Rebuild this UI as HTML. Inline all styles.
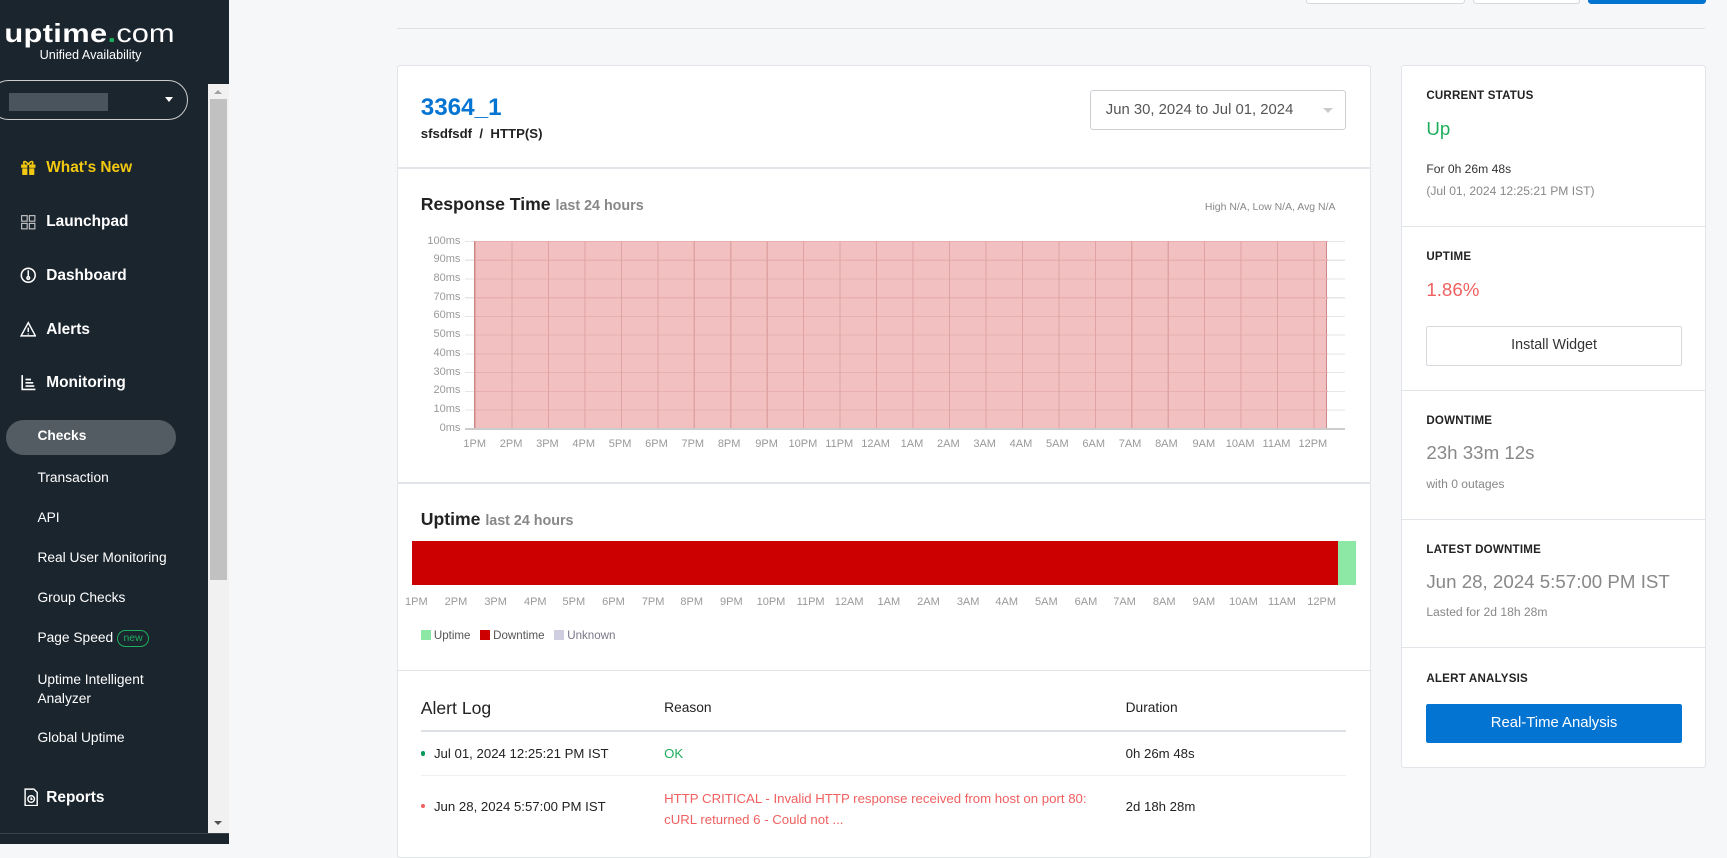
<!DOCTYPE html>
<html><head><meta charset="utf-8"><style>
*{box-sizing:border-box;margin:0;padding:0}
html,body{width:1727px;height:844px;overflow:hidden;background:#f6f7f9;font-family:"Liberation Sans",sans-serif}
#w{position:absolute;left:0;top:0;width:1568px;height:766px;zoom:1.10140;background:#f6f7f9}
.a{position:absolute;white-space:nowrap}
#sb{position:absolute;left:0;top:0;width:208px;height:766px;background:#1b252e}
.nav{position:absolute;left:42px;color:#fff;font-size:14px;font-weight:bold}
.sub{position:absolute;left:34px;color:#fff;font-size:12.5px}
.ic{position:absolute;left:18px;width:15px;height:15px}
.card{position:absolute;background:#fff;border:1px solid #e1e4e8;border-radius:3px}
.hr{position:absolute;height:1px;background:#e1e4e8}
.yl{position:absolute;right:1150px;font-size:10px;color:#999;text-align:right}
.xl{position:absolute;font-size:10px;color:#999;transform:translateX(-50%)}
.lbl{position:absolute;left:1295px;font-size:10.5px;font-weight:bold;color:#222;letter-spacing:.2px}
</style></head><body><div id="w">
<!-- top bar -->
<div class="a" style="left:360px;top:25px;width:1188px;height:1px;background:#dde0e4"></div>
<div class="a" style="left:1186px;top:-4px;width:144px;height:8px;border:1px solid #d5d8dc;border-radius:3px;background:#fff"></div>
<div class="a" style="left:1337px;top:-4px;width:98px;height:8px;border:1px solid #d5d8dc;border-radius:3px;background:#fff"></div>
<div class="a" style="left:1442px;top:-4px;width:107px;height:8px;border-radius:3px;background:#0474d2"></div>

<!-- sidebar -->
<div id="sb">
 <div class="a" style="left:4px;top:17px;color:#fff;font-size:28px;font-weight:bold;letter-spacing:.3px;line-height:30px;transform:scaleY(.85);transform-origin:0 0">uptime<span style="color:#1fae5d">.</span><span style="font-weight:normal;letter-spacing:0">com</span></div>
 <div class="a" style="left:36px;top:44px;color:#fff;font-size:11.5px">Unified Availability</div>
 <div class="a" style="left:-10px;top:73px;width:181px;height:36px;border:1px solid #ccc;border-radius:18px"></div>
 <div class="a" style="left:8px;top:84px;width:90px;height:17px;background:#4a545c"></div>
 <div class="a" style="left:150px;top:88px;width:0;height:0;border-left:4px solid transparent;border-right:4px solid transparent;border-top:5px solid #fff"></div>
 <svg class="ic" style="top:144px" viewBox="0 0 15 15"><rect x="1" y="5" width="13" height="3" fill="#f2c811"/><rect x="2" y="8.5" width="11" height="6" fill="#f2c811"/><rect x="6.7" y="5" width="1.6" height="10" fill="#1b252e"/><path d="M7.5 5C5 1 2 2 4 5M7.5 5C10 1 13 2 11 5" stroke="#f2c811" stroke-width="1.5" fill="none"/></svg>
 <div class="nav" style="top:144px;color:#f2c811">What's New</div>
 <svg class="ic" style="top:194px" viewBox="0 0 15 15" fill="none" stroke="#ccc"><rect x="1.5" y="1.5" width="5" height="5"/><rect x="8.5" y="1.5" width="5" height="5"/><rect x="1.5" y="8.5" width="5" height="5"/><rect x="8.5" y="8.5" width="5" height="5"/></svg>
 <div class="nav" style="top:193px">Launchpad</div>
 <svg class="ic" style="top:242px" viewBox="0 0 15 15" fill="none" stroke="#fff" stroke-width="1.4"><circle cx="7.5" cy="7.5" r="6.3"/><path d="M7.5 3v6"/><circle cx="7.5" cy="10" r="1.2"/></svg>
 <div class="nav" style="top:242px">Dashboard</div>
 <svg class="ic" style="top:291px" viewBox="0 0 15 15" fill="none" stroke="#fff" stroke-width="1.3"><path d="M7.5 1.5L14 13.5H1z"/><path d="M7.5 6v4M7.5 11.3v1"/></svg>
 <div class="nav" style="top:291px">Alerts</div>
 <svg class="ic" style="top:340px" viewBox="0 0 15 15" fill="none" stroke="#fff" stroke-width="1.5"><path d="M2 1v13h12M5 5h5M5 8h7M5 11h8"/></svg>
 <div class="nav" style="top:340px">Monitoring</div>
 <div class="a" style="left:5px;top:381px;width:155px;height:32px;border-radius:16px;background:#535c63"></div>
 <div class="sub" style="top:389px;font-weight:bold">Checks</div>
 <div class="sub" style="top:427px">Transaction</div>
 <div class="sub" style="top:463px">API</div>
 <div class="sub" style="top:499px">Real User Monitoring</div>
 <div class="sub" style="top:536px">Group Checks</div>
 <div class="sub" style="top:572px">Page Speed <span style="display:inline-block;border:1px solid #1fae5d;color:#1fae5d;border-radius:9px;font-size:9.5px;padding:0 5px;line-height:14px;vertical-align:1px">new</span></div>
 <div class="sub" style="top:608px;line-height:18px">Uptime Intelligent<br>Analyzer</div>
 <div class="sub" style="top:663px">Global Uptime</div>
 <svg class="ic" style="top:715px;left:22px;width:13px;height:17px" viewBox="0 0 13 17" fill="none" stroke="#fff" stroke-width="1.3"><path d="M1 1h8l3 3v12H1z"/><circle cx="6.5" cy="10" r="3"/><path d="M6.5 8.5v1.7h1.3"/></svg>
 <div class="nav" style="top:716px">Reports</div>
 <div class="a" style="left:189px;top:76px;width:19px;height:680px;background:#f1f1f1"></div>
 <div class="a" style="left:191px;top:90px;width:15px;height:437px;background:#c1c1c1"></div>
 <div class="a" style="left:194px;top:82px;width:0;height:0;border-left:4px solid transparent;border-right:4px solid transparent;border-bottom:4px solid #a3a3a3"></div>
 <div class="a" style="left:194px;top:745px;width:0;height:0;border-left:4px solid transparent;border-right:4px solid transparent;border-top:4px solid #505050"></div>
 <div class="a" style="left:0;top:756px;width:208px;height:1px;background:#3a444c"></div>
</div>

<!-- main card -->
<div class="card" style="left:360px;top:59px;width:885px;height:720px"></div>
<div class="a" style="left:382px;top:85px;font-size:22px;font-weight:bold;color:#0474d2">3364_1</div>
<div class="a" style="left:382px;top:114px;font-size:12px;color:#222;font-weight:bold">sfsdfsdf&nbsp; / &nbsp;HTTP(S)</div>
<div class="a" style="left:990px;top:82px;width:232px;height:36px;border:1px solid #ccd0d5;border-radius:3px"></div>
<div class="a" style="left:1004px;top:93px;font-size:13.5px;color:#555">Jun 30, 2024 to Jul 01, 2024</div>
<div class="a" style="left:1201px;top:98px;width:0;height:0;border-left:5px solid transparent;border-right:5px solid transparent;border-top:5px solid #ccc"></div>
<div class="hr" style="left:361px;top:152px;width:883px"></div>

<div class="a" style="left:382px;top:176px;font-size:16px;font-weight:bold;color:#222">Response Time <span style="font-size:13px;color:#888">last 24 hours</span></div>
<div class="a" style="left:1094px;top:183px;font-size:9.5px;color:#888">High N/A, Low N/A, Avg N/A</div>
<div class="a" style="left:422px;top:219px;width:799px;height:171px;background:repeating-linear-gradient(180deg,#e6e6e6 0 1px,transparent 1px 17px)"></div>
<div class="a" style="left:430px;top:219px;width:775px;height:170px;background:#f2c0c0;border-top:1px solid #d89a9a;border-left:1px solid #c88;border-right:1px solid #c88"></div>
<div class="a" style="left:431px;top:219px;width:775px;height:170px;background:repeating-linear-gradient(90deg,#e0a3a3 0 1px,transparent 1px 33.1px),repeating-linear-gradient(180deg,#e8b0b0 0 1px,transparent 1px 17px)"></div>
<div class="a" style="left:422px;top:389px;width:799px;height:1px;background:#ccc"></div>
<div class="yl" style="top:213px">100ms</div><div class="yl" style="top:230px">90ms</div><div class="yl" style="top:247px">80ms</div><div class="yl" style="top:264px">70ms</div><div class="yl" style="top:281px">60ms</div><div class="yl" style="top:298px">50ms</div><div class="yl" style="top:315px">40ms</div><div class="yl" style="top:332px">30ms</div><div class="yl" style="top:349px">20ms</div><div class="yl" style="top:366px">10ms</div><div class="yl" style="top:383px">0ms</div>
<div class="hr" style="left:361px;top:438px;width:883px"></div>

<div class="a" style="left:382px;top:462px;font-size:16px;font-weight:bold;color:#222">Uptime <span style="font-size:13px;color:#888">last 24 hours</span></div>
<div class="a" style="left:374px;top:491px;width:841px;height:40px;background:#cc0000"></div>
<div class="a" style="left:1215px;top:491px;width:16px;height:40px;background:#8de8a6"></div>
<div class="a" style="left:382px;top:572px;font-size:10.5px;color:#555"><span style="display:inline-block;width:9px;height:9px;background:#8de8a6;vertical-align:-1px"></span> Uptime &nbsp; <span style="display:inline-block;width:9px;height:9px;background:#cc0000;vertical-align:-1px"></span> Downtime &nbsp; <span style="display:inline-block;width:9px;height:9px;background:#cfcde0;vertical-align:-1px"></span> <span style="color:#778">Unknown</span></div>
<div class="hr" style="left:361px;top:608px;width:883px"></div>

<div class="a" style="left:382px;top:634px;font-size:16px;color:#222">Alert Log</div>
<div class="a" style="left:603px;top:636px;font-size:12.5px;color:#222">Reason</div>
<div class="a" style="left:1022px;top:636px;font-size:12.5px;color:#222">Duration</div>
<div class="a" style="left:382px;top:663px;width:840px;height:2px;background:#dde0e4"></div>
<div class="a" style="left:382px;top:682px;width:4px;height:4px;border-radius:2px;background:#0a9a5a"></div>
<div class="a" style="left:394px;top:677px;font-size:12px;color:#222">Jul 01, 2024 12:25:21 PM IST</div>
<div class="a" style="left:603px;top:677px;font-size:12px;color:#1fae5d">OK</div>
<div class="a" style="left:1022px;top:677px;font-size:12px;color:#222">0h 26m 48s</div>
<div class="hr" style="left:382px;top:704px;width:840px;background:#eef0f2"></div>
<div class="a" style="left:382px;top:730px;width:4px;height:4px;border-radius:2px;background:#f06060"></div>
<div class="a" style="left:394px;top:725px;font-size:12px;color:#222">Jun 28, 2024 5:57:00 PM IST</div>
<div class="a" style="left:603px;top:716px;font-size:12px;color:#f06060;line-height:19px">HTTP CRITICAL - Invalid HTTP response received from host on port 80:<br>cURL returned 6 - Could not ...</div>
<div class="a" style="left:1022px;top:725px;font-size:12px;color:#222">2d 18h 28m</div>

<!-- right card -->
<div class="card" style="left:1272px;top:59px;width:277px;height:638px"></div>
<div class="lbl" style="top:82px">CURRENT STATUS</div>
<div class="a" style="left:1295px;top:107px;font-size:17px;color:#1fae5d">Up</div>
<div class="a" style="left:1295px;top:147px;font-size:11px;color:#333">For 0h 26m 48s</div>
<div class="a" style="left:1295px;top:167px;font-size:11px;color:#888">(Jul 01, 2024 12:25:21 PM IST)</div>
<div class="hr" style="left:1273px;top:205px;width:275px"></div>
<div class="lbl" style="top:228px">UPTIME</div>
<div class="a" style="left:1295px;top:253px;font-size:17px;color:#f06060">1.86%</div>
<div class="a" style="left:1295px;top:296px;width:232px;height:36px;border:1px solid #d5d8dc;border-radius:2px;text-align:center;line-height:34px;font-size:13px;color:#333">Install Widget</div>
<div class="hr" style="left:1273px;top:354px;width:275px"></div>
<div class="lbl" style="top:377px">DOWNTIME</div>
<div class="a" style="left:1295px;top:401px;font-size:17px;color:#888">23h 33m 12s</div>
<div class="a" style="left:1295px;top:433px;font-size:11px;color:#888">with 0 outages</div>
<div class="hr" style="left:1273px;top:471px;width:275px"></div>
<div class="lbl" style="top:494px">LATEST DOWNTIME</div>
<div class="a" style="left:1295px;top:518px;font-size:17px;color:#888">Jun 28, 2024 5:57:00 PM IST</div>
<div class="a" style="left:1295px;top:549px;font-size:11px;color:#888">Lasted for 2d 18h 28m</div>
<div class="hr" style="left:1273px;top:587px;width:275px"></div>
<div class="lbl" style="top:611px">ALERT ANALYSIS</div>
<div class="a" style="left:1295px;top:639px;width:232px;height:36px;background:#0474d2;border-radius:2px;text-align:center;line-height:36px;font-size:13.5px;color:#fff">Real-Time Analysis</div>

<div class="xl" style="left:431px;top:398px">1PM</div><div class="xl" style="left:464px;top:398px">2PM</div><div class="xl" style="left:497px;top:398px">3PM</div><div class="xl" style="left:530px;top:398px">4PM</div><div class="xl" style="left:563px;top:398px">5PM</div><div class="xl" style="left:596px;top:398px">6PM</div><div class="xl" style="left:629px;top:398px">7PM</div><div class="xl" style="left:662px;top:398px">8PM</div><div class="xl" style="left:696px;top:398px">9PM</div><div class="xl" style="left:729px;top:398px">10PM</div><div class="xl" style="left:762px;top:398px">11PM</div><div class="xl" style="left:795px;top:398px">12AM</div><div class="xl" style="left:828px;top:398px">1AM</div><div class="xl" style="left:861px;top:398px">2AM</div><div class="xl" style="left:894px;top:398px">3AM</div><div class="xl" style="left:927px;top:398px">4AM</div><div class="xl" style="left:960px;top:398px">5AM</div><div class="xl" style="left:993px;top:398px">6AM</div><div class="xl" style="left:1026px;top:398px">7AM</div><div class="xl" style="left:1059px;top:398px">8AM</div><div class="xl" style="left:1093px;top:398px">9AM</div><div class="xl" style="left:1126px;top:398px">10AM</div><div class="xl" style="left:1159px;top:398px">11AM</div><div class="xl" style="left:1192px;top:398px">12PM</div>

<div class="xl" style="left:378px;top:541px">1PM</div><div class="xl" style="left:414px;top:541px">2PM</div><div class="xl" style="left:450px;top:541px">3PM</div><div class="xl" style="left:486px;top:541px">4PM</div><div class="xl" style="left:521px;top:541px">5PM</div><div class="xl" style="left:557px;top:541px">6PM</div><div class="xl" style="left:593px;top:541px">7PM</div><div class="xl" style="left:628px;top:541px">8PM</div><div class="xl" style="left:664px;top:541px">9PM</div><div class="xl" style="left:700px;top:541px">10PM</div><div class="xl" style="left:736px;top:541px">11PM</div><div class="xl" style="left:771px;top:541px">12AM</div><div class="xl" style="left:807px;top:541px">1AM</div><div class="xl" style="left:843px;top:541px">2AM</div><div class="xl" style="left:879px;top:541px">3AM</div><div class="xl" style="left:914px;top:541px">4AM</div><div class="xl" style="left:950px;top:541px">5AM</div><div class="xl" style="left:986px;top:541px">6AM</div><div class="xl" style="left:1021px;top:541px">7AM</div><div class="xl" style="left:1057px;top:541px">8AM</div><div class="xl" style="left:1093px;top:541px">9AM</div><div class="xl" style="left:1129px;top:541px">10AM</div><div class="xl" style="left:1164px;top:541px">11AM</div><div class="xl" style="left:1200px;top:541px">12PM</div>
</div></body></html>
